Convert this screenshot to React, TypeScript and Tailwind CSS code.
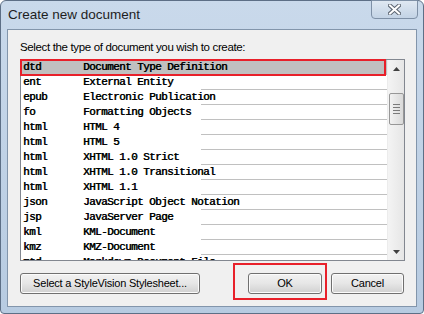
import React from "react";

const rows = [
  ["dtd", "Document Type Definition"],
  ["ent", "External Entity"],
  ["epub", "Electronic Publication"],
  ["fo", "Formatting Objects"],
  ["html", "HTML 4"],
  ["html", "HTML 5"],
  ["html", "XHTML 1.0 Strict"],
  ["html", "XHTML 1.0 Transitional"],
  ["html", "XHTML 1.1"],
  ["json", "JavaScript Object Notation"],
  ["jsp", "JavaServer Page"],
  ["kml", "KML-Document"],
  ["kmz", "KMZ-Document"],
  ["mtd", "Markdown Document File"],
];

const ui = { fontFamily: '"Liberation Sans", Arial, sans-serif' };
const mono = { fontFamily: '"Liberation Mono", "Courier New", monospace' };

const Btn = ({ label, className }: { label: string; className: string }) => (
  <button
    className={`shrink-0 h-[21px] rounded-[3px] border border-[#707070] bg-gradient-to-b from-[#f2f2f2] via-[#e6e6e6] to-[#d0d0d0] text-[11px] tracking-[-0.2px] text-black shadow-[inset_0_0_0_1px_#fbfbfb] ${className}`}
    style={ui}
  >
    {label}
  </button>
);

export default function App() {
  return (
    <div className="w-[424px] h-[314px] overflow-hidden bg-white">
      <div className="w-[424px] h-[314px] rounded-t-[6px] rounded-b-[4px] border border-[#5d6f86] bg-gradient-to-b from-[#c9d9eb] to-[#b7cbe1] flex flex-col">
        {/* title bar */}
        <div className="shrink-0 h-[28px] flex items-start justify-between">
          <span className="pl-[7px] pt-[6px] text-[13.5px] leading-[16px] text-[#1e1e1e]" style={ui}>
            Create new document
          </span>
          <div className="mr-[5px] w-[47px] h-[19px] -mt-px rounded-b-[4px] border border-[#7e90a6] bg-gradient-to-b from-[#dfe8f2] to-[#c3d3e5] flex items-center justify-center">
            <svg width="13" height="11" viewBox="0 0 13 11">
              <path d="M2 1.5 L11 9.5 M11 1.5 L2 9.5" stroke="#5b6470" strokeWidth="4" strokeLinecap="square" />
              <path d="M2 1.5 L11 9.5 M11 1.5 L2 9.5" stroke="#ffffff" strokeWidth="2" strokeLinecap="square" />
            </svg>
          </div>
        </div>

        {/* client area */}
        <div className="shrink-0 mx-[6px] h-[278px] border border-[#8295ab] bg-[#f0f0f0] flex flex-col pl-[12px] pr-[11px]">
          <div className="shrink-0 pt-[10px] h-[29px] text-[11.5px] leading-[15px] tracking-[-0.35px] text-black" style={ui}>
            Select the type of document you wish to create:
          </div>
          <div className="shrink-0 relative w-[385px] h-[202px] border border-[#828790] bg-white flex">
            <div className="w-[366px] h-[200px] overflow-hidden">
              {rows.map(([ext, desc], i) => (
                <div
                  key={i}
                  className={`relative h-[15px] flex text-[11px] leading-[15px] tracking-[-0.6px] text-black [text-shadow:0.4px_0_0_#000] ${
                    i === 0 ? "bg-[#c0c0c0]" : ""
                  }`}
                  style={mono}
                >
                  <span className="w-[62px] pl-[2px]">{ext}</span>
                  <span>{desc}</span>
                  <div className="absolute left-[180px] right-0 bottom-0 h-px bg-[#c0c0c0]" />
                </div>
              ))}
            </div>
            {/* scrollbar */}
            <div className="w-[17px] h-[200px] bg-gradient-to-r from-[#f4f4f4] to-[#e6e6e6] border-l border-[#ececec] flex flex-col items-center">
              <div className="h-[17px] flex items-center justify-center">
                <svg width="7" height="4" viewBox="0 0 7 4">
                  <path d="M0 4 L3.5 0 L7 4 Z" fill="#404040" />
                </svg>
              </div>
              <div className="mt-[16px] w-[15px] h-[32px] rounded-[2px] border border-[#979797] bg-gradient-to-r from-[#f2f2f2] to-[#d9d9d9] flex flex-col items-center justify-center gap-[2px]">
                <div className="w-[7px] h-px bg-[#7a7a7a]" />
                <div className="w-[7px] h-px bg-[#7a7a7a]" />
                <div className="w-[7px] h-px bg-[#7a7a7a]" />
                <div className="w-[7px] h-px bg-[#7a7a7a]" />
              </div>
              <div className="flex-1" />
              <div className="h-[17px] flex items-center justify-center">
                <svg width="7" height="4" viewBox="0 0 7 4">
                  <path d="M0 0 L7 0 L3.5 4 Z" fill="#404040" />
                </svg>
              </div>
            </div>
            {/* red highlight around selected row */}
            <div className="absolute -left-px -top-px w-[366px] h-[17px] border-2 border-[#e8202a]" />
          </div>

          <div className="shrink-0 mt-[2px] h-[37px] flex items-start">
            <Btn label="Select a StyleVision Stylesheet..." className="mt-[10px] w-[180px]" />
            <div className="shrink-0 ml-[33px] w-[94px] h-[37px] border-2 border-[#e8202a] flex items-start pt-[8px] pl-[13px]">
              <Btn label="OK" className="w-[74px]" />
            </div>
            <Btn label="Cancel" className="mt-[10px] ml-[4px] w-[73px]" />
          </div>
        </div>
      </div>
    </div>
  );
}
